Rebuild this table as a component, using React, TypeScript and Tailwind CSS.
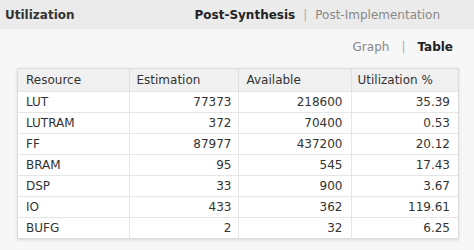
const rows = [
  { name: 'LUT', est: 77373, avail: 218600, util: '35.39' },
  { name: 'LUTRAM', est: 372, avail: 70400, util: '0.53' },
  { name: 'FF', est: 87977, avail: 437200, util: '20.12' },
  { name: 'BRAM', est: 95, avail: 545, util: '17.43' },
  { name: 'DSP', est: 33, avail: 900, util: '3.67' },
  { name: 'IO', est: 433, avail: 362, util: '119.61' },
  { name: 'BUFG', est: 2, avail: 32, util: '6.25' },
]

export default function App() {
  return (
    <div className="w-[474px] h-[250px] bg-[#f7f7f7] text-[12px] text-[#333] font-['DejaVu_Sans',sans-serif] overflow-hidden">
      <div className="h-[29px] bg-[#ebebeb] flex items-center justify-between pl-[5px] pr-[34px]">
        <span className="font-bold text-[#333]">Utilization</span>
        <div className="flex items-center gap-[8px]">
          <span className="font-bold text-[#222]">Post-Synthesis</span>
          <span className="text-[#aaa]">|</span>
          <span className="text-[#888]">Post-Implementation</span>
        </div>
      </div>

      <div className="h-[36px] flex items-center justify-end pr-[21px] gap-[12px]">
        <span className="text-[#888]">Graph</span>
        <span className="text-[#aaa]">|</span>
        <span className="font-bold text-[#222]">Table</span>
      </div>

      <div className="mt-[3px] ml-[17px] w-[442px] bg-white border border-[#dcdcdc] shadow-[0_1px_3px_rgba(0,0,0,0.12)]">
        <table className="w-full table-fixed border-collapse">
          <thead>
            <tr className="h-[22px] bg-[#f0f0f0]">
              <th className="w-[111px] text-left font-normal pl-[8px] border-r border-[#e0e0e0]">Resource</th>
              <th className="w-[109px] text-left font-normal pl-[7px] border-r border-[#e0e0e0]">Estimation</th>
              <th className="w-[113px] text-left font-normal pl-[8px] border-r border-[#e0e0e0]">Available</th>
              <th className="text-left font-normal pl-[6px]">Utilization %</th>
            </tr>
          </thead>
          <tbody>
            {rows.map((r) => (
              <tr key={r.name} className="h-[21px] border-t border-[#e6e6e6]">
                <td className="pl-[8px] border-r border-[#e6e6e6]">{r.name}</td>
                <td className="text-right pr-[6px] border-r border-[#e6e6e6]">{r.est}</td>
                <td className="text-right pr-[8px] border-r border-[#e6e6e6]">{r.avail}</td>
                <td className="text-right pr-[8px]">{r.util}</td>
              </tr>
            ))}
          </tbody>
        </table>
      </div>
    </div>
  )
}
